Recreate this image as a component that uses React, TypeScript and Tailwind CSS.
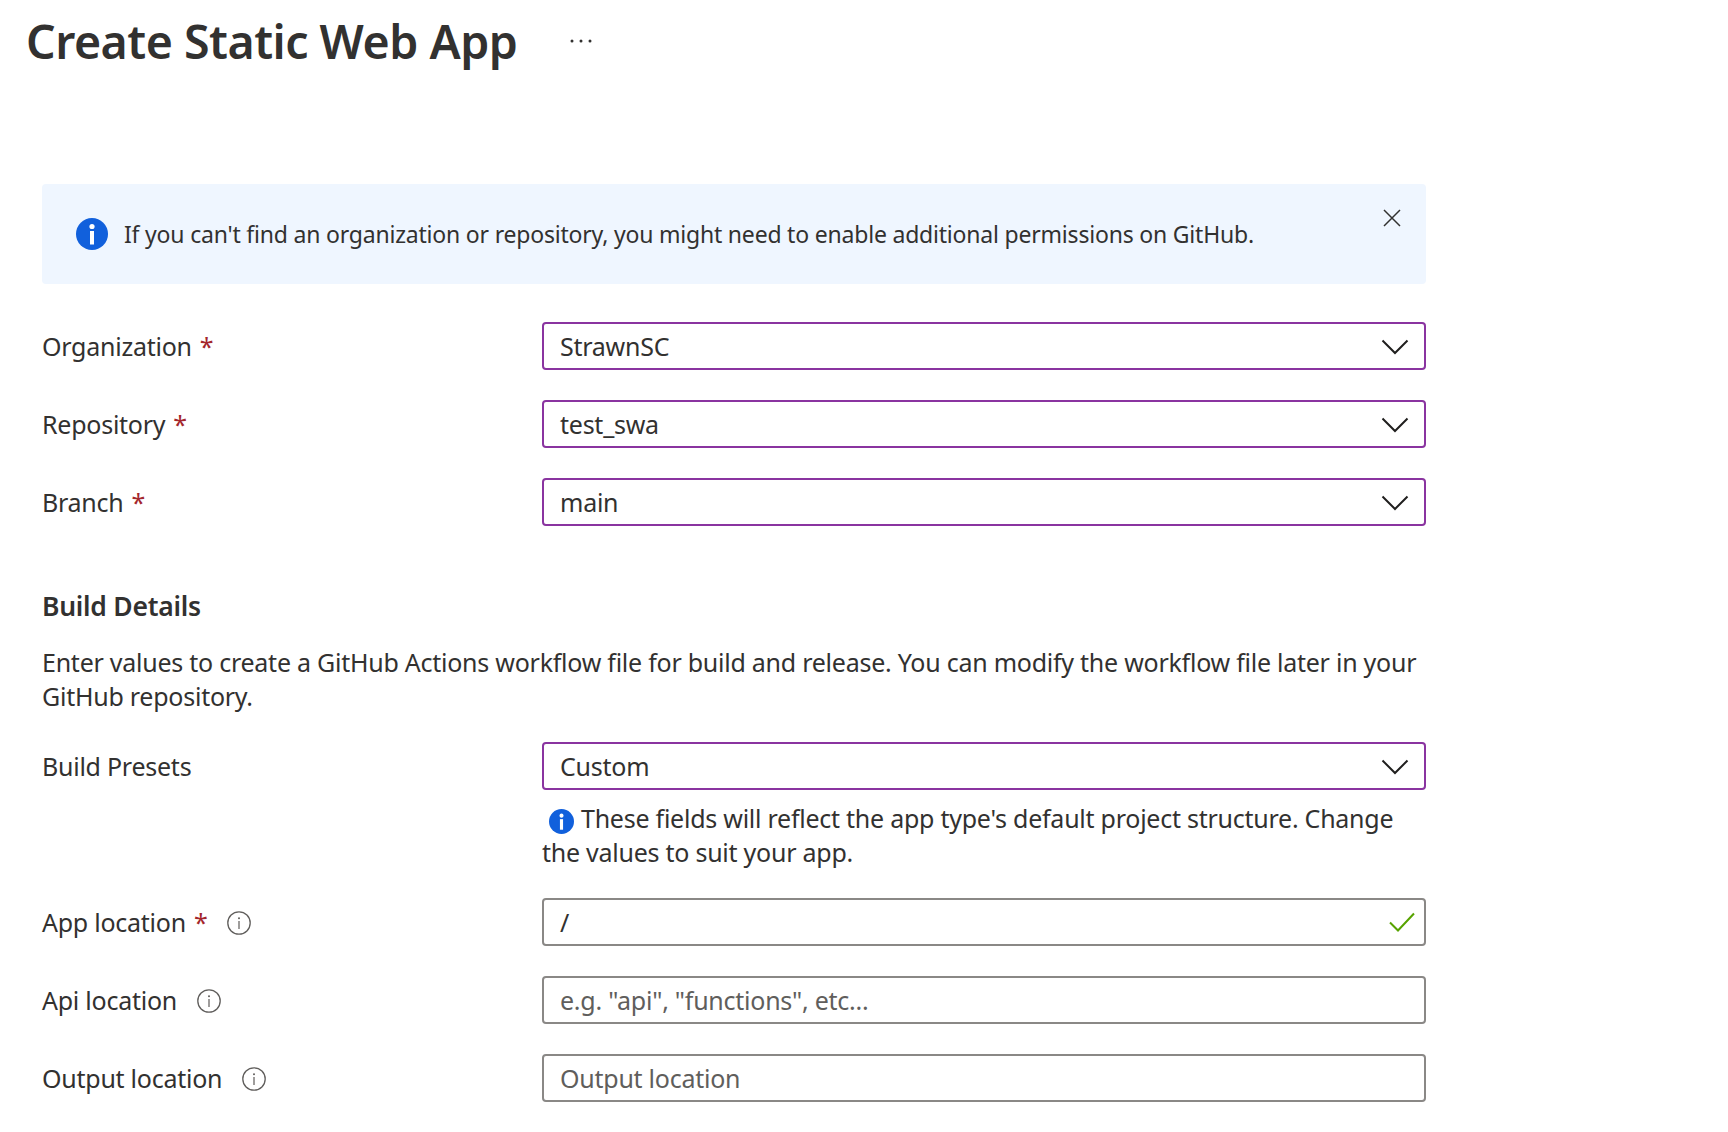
import type { ReactNode } from 'react'

const FONT = "font-['Noto_Sans','Open_Sans',sans-serif]"

function InfoFilled({ size }: { size: number }) {
  return (
    <svg width={size} height={size} viewBox="0 0 32 32" className="shrink-0">
      <circle cx="16" cy="16" r="16" fill="#1160dc" />
      <circle cx="16" cy="8.5" r="2.6" fill="#fff" />
      <rect x="14" y="13" width="4" height="13.5" fill="#fff" />
    </svg>
  )
}

function InfoOutline() {
  return (
    <svg width="24" height="24" viewBox="0 0 24 24" className="shrink-0">
      <circle cx="12" cy="12" r="11.2" fill="none" stroke="#605e5c" strokeWidth="1.3" />
      <circle cx="12" cy="7.2" r="1" fill="#605e5c" />
      <rect x="11.4" y="10" width="1.2" height="8" fill="#605e5c" />
    </svg>
  )
}

function Chevron() {
  return (
    <svg width="28" height="16" viewBox="0 0 28 16" className="shrink-0 mt-[1px]">
      <path d="M1.5 1.5 L14 14 L26.5 1.5" fill="none" stroke="#201f1e" strokeWidth="2" />
    </svg>
  )
}

function Check() {
  return (
    <svg width="26" height="20" viewBox="0 0 26 20" className="shrink-0">
      <path d="M1 10.5 L9 18.5 L25 1.5" fill="none" stroke="#57a300" strokeWidth="2" />
    </svg>
  )
}

function Label({ text, required, info }: { text: string; required?: boolean; info?: boolean }) {
  return (
    <div className="w-[500px] shrink-0 flex items-center text-[#323130]">
      <span>{text}</span>
      {required && <span className="ml-2 text-[#a4262c]">*</span>}
      {info && <span className="ml-[20px] mt-[2px]"><InfoOutline /></span>}
    </div>
  )
}

function Box({ focused, children }: { focused?: boolean; children: ReactNode }) {
  return (
    <div
      className={
        'w-[884px] h-[48px] flex items-center justify-between pl-[16px] rounded-[4px] border-2 ' +
        (focused ? 'border-[#8a34a0] pr-[15px]' : 'border-[#8a8886] pr-[9px]')
      }
    >
      {children}
    </div>
  )
}

function SelectRow({ label, value, required }: { label: string; value: string; required?: boolean }) {
  return (
    <div className="flex items-center">
      <Label text={label} required={required} />
      <Box focused>
        <span className="text-[#323130]">{value}</span>
        <Chevron />
      </Box>
    </div>
  )
}

function InputRow({ label, value, placeholder, required, valid }: { label: string; value?: string; placeholder?: string; required?: boolean; valid?: boolean }) {
  return (
    <div className="flex items-center">
      <Label text={label} required={required} info />
      <Box>
        <span className={value ? 'text-[#323130]' : 'text-[#605e5c]'}>{value || placeholder}</span>
        {valid && <Check />}
      </Box>
    </div>
  )
}

export default function App() {
  return (
    <div className={`${FONT} w-[1728px] h-[1132px] overflow-hidden bg-white text-[25px] leading-[35px] tracking-[-0.25px] text-[#323130]`}>
      <div className="flex items-center h-[82px] pl-[26px]">
        <h1 className="text-[46.5px] leading-[82px] font-semibold tracking-[-0.5px]">Create Static Web App</h1>
        <svg width="24" height="6" viewBox="0 0 24 6" className="ml-[52px]">
          <circle cx="3" cy="3" r="1.5" fill="#323130" />
          <circle cx="12" cy="3" r="1.5" fill="#323130" />
          <circle cx="21" cy="3" r="1.5" fill="#323130" />
        </svg>
      </div>

      <div className="ml-[42px] w-[1384px] mt-[102px]">
        <div className="relative h-[100px] rounded-[4px] bg-[#eff6ff] flex items-center pl-[34px] gap-[16px] text-[23px] tracking-[-0.2px]">
          <InfoFilled size={32} />
          <span>If you can't find an organization or repository, you might need to enable additional permissions on GitHub.</span>
          <svg width="18" height="18" viewBox="0 0 18 18" className="absolute right-[25px] top-[25px]">
            <path d="M1 1 L17 17 M17 1 L1 17" stroke="#323130" strokeWidth="1.5" />
          </svg>
        </div>

        <div className="mt-[38px] flex flex-col gap-[30px]">
          <SelectRow label="Organization" value="StrawnSC" required />
          <SelectRow label="Repository" value="test_swa" required />
          <SelectRow label="Branch" value="main" required />
        </div>

        <h2 className="mt-[63px] text-[26.5px] font-semibold">Build Details</h2>
        <p className="mt-[21px] leading-[34px]">
          Enter values to create a GitHub Actions workflow file for build and release. You can modify the workflow file later in your GitHub repository.
        </p>

        <div className="mt-[29px]">
          <SelectRow label="Build Presets" value="Custom" />
        </div>
        <p className="ml-[500px] w-[884px] mt-[11px] leading-[34px]">
          <svg width="25" height="25" viewBox="0 0 32 32" className="inline-block align-[-6px] ml-[7px] mr-[7px]">
            <circle cx="16" cy="16" r="16" fill="#1160dc" />
            <circle cx="16" cy="8.5" r="2.6" fill="#fff" />
            <rect x="14" y="13" width="4" height="13.5" fill="#fff" />
          </svg>
          These fields will reflect the app type's default project structure. Change the values to suit your app.
        </p>

        <div className="mt-[29px] flex flex-col gap-[30px]">
          <InputRow label="App location" value="/" required valid />
          <InputRow label="Api location" placeholder='e.g. "api", "functions", etc...' />
          <InputRow label="Output location" placeholder="Output location" />
        </div>
      </div>
    </div>
  )
}
